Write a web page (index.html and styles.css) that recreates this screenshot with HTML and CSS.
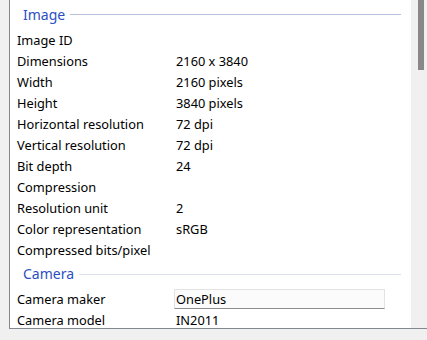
FILE: index.html
```html
<!DOCTYPE html>
<html lang="en">

<head>
    <meta charset="UTF-8">
    <meta name="viewport" content="width=device-width, initial-scale=1.0">
    <title>Properties - Details</title>
    <link rel="stylesheet" href="styles.css">
</head>

<body>
    <div class="window">
        <div class="pane">
            <div class="list">
                <div class="group group-first"><span class="group-title">Image</span></div>
                <div class="row"><span class="key">Image ID</span><span class="val"></span></div>
                <div class="row"><span class="key">Dimensions</span><span class="val">2160 x 3840</span></div>
                <div class="row"><span class="key">Width</span><span class="val">2160 pixels</span></div>
                <div class="row"><span class="key">Height</span><span class="val">3840 pixels</span></div>
                <div class="row"><span class="key">Horizontal resolution</span><span class="val">72 dpi</span></div>
                <div class="row"><span class="key">Vertical resolution</span><span class="val">72 dpi</span></div>
                <div class="row"><span class="key">Bit depth</span><span class="val">24</span></div>
                <div class="row"><span class="key">Compression</span><span class="val"></span></div>
                <div class="row"><span class="key">Resolution unit</span><span class="val">2</span></div>
                <div class="row"><span class="key">Color representation</span><span class="val">sRGB</span></div>
                <div class="row"><span class="key">Compressed bits/pixel</span><span class="val"></span></div>

                <div class="group group-light"><span class="group-title">Camera</span></div>
                <div class="row"><span class="key">Camera maker</span><span class="val edit">OnePlus</span></div>
                <div class="row"><span class="key">Camera model</span><span class="val">IN2011</span></div>
            </div>
            <div class="scrollbar">
                <div class="thumb"></div>
            </div>
        </div>
    </div>
</body>

</html>
```

FILE: styles.css
```css
body {
    margin: 0;
    font-family: "Noto Sans", "Open Sans", sans-serif;
    background-color: #f0f0f0;
    overflow: hidden;
}

.window {
    height: 340px;
    background-color: #f0f0f0;
}

.pane {
    display: flex;
    margin-left: 9px;
    height: 328px;
    background-color: #ffffff;
    border-left: 1px solid #828790;
    border-bottom: 1px solid #828790;
    overflow: hidden;
}

.list {
    flex: 1;
    overflow: hidden;
}

.group {
    display: flex;
    align-items: center;
    height: 28px;
    padding-left: 13px;
    padding-right: 10px;
}

.group-first {
    height: 29px;
}

.group-title {
    font-size: 14px;
    color: #2b4fc2;
    line-height: 18px;
}

.group::after {
    content: "";
    flex: 1;
    height: 1px;
    margin-left: 5px;
    background-color: #b6c0dc;
}

.group-light::after {
    background-color: #dde2ec;
}

.row {
    display: flex;
    align-items: center;
    height: 21px;
    padding-left: 7px;
    font-size: 12.8px;
    color: #000000;
    white-space: nowrap;
}

.row .key {
    width: 157px;
}

.row .val {
    padding-left: 2px;
}

.row .edit {
    box-sizing: border-box;
    width: 211px;
    height: 20px;
    margin-top: 1px;
    padding-left: 1px;
    line-height: 18px;
    background-color: #fbfbfb;
    border: 1px solid #e3e3e3;
    border-bottom-color: #8d8d8d;
}

.scrollbar {
    width: 16px;
    background-color: #f0f0f0;
}

.thumb {
    margin-left: 7px;
    width: 6px;
    height: 70px;
    background-color: #888888;
}
```
